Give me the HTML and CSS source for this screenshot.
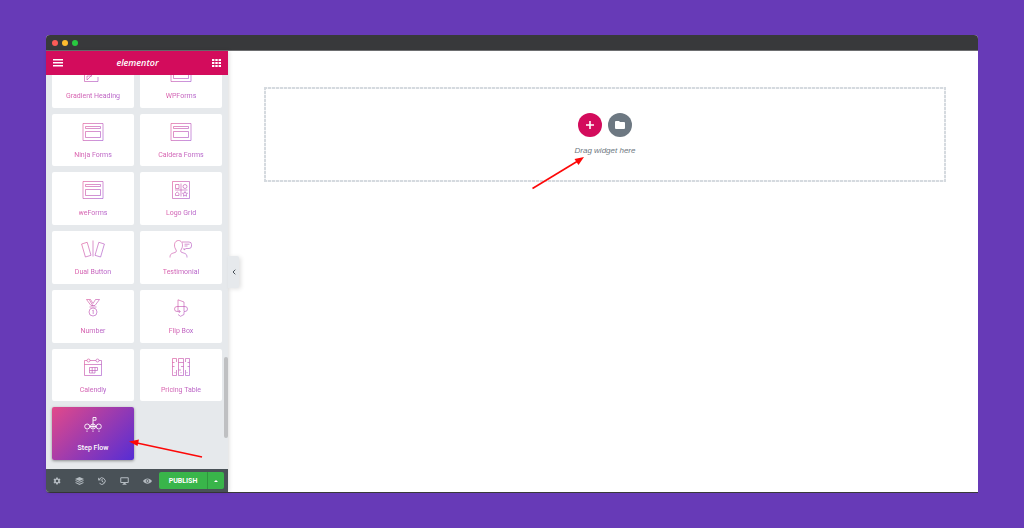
FILE: index.html
```html
<!DOCTYPE html>
<html lang="en">
<head>
  <meta charset="UTF-8" />
  <meta name="viewport" content="width=device-width, initial-scale=1.0"/>
  <title>Elementor</title>
  <link rel="stylesheet" href="styles.css">
</head>
<body>
  <!-- Shared icon parts -->
  <svg class="defs" aria-hidden="true">
    <defs>
      <linearGradient id="pink" gradientUnits="userSpaceOnUse" x1="0" y1="0" x2="24" y2="18">
        <stop offset="0" stop-color="#e2498a"/>
        <stop offset="1" stop-color="#9a4bd0"/>
      </linearGradient>
      <symbol id="form" viewBox="0 0 24 18">
        <path d="M2 .5h20v17H2zM4.500 3.500h15v2h-15zM4.500 8.500h15v6h-15z"/>
      </symbol>
    </defs>
  </svg>

  <div class="window">
    <div class="titlebar">
      <span class="dot red"></span>
      <span class="dot yellow"></span>
      <span class="dot green"></span>
    </div>

    <div class="editor">
      <!-- Widget panel -->
      <aside class="panel">
        <header class="panel-header">
          <button class="icon-btn" aria-label="Menu">
            <svg width="10" height="8" viewBox="0 0 10 8"><path d="M0 0h10v1.6H0zM0 3h10v1.6H0zM0 6h10v1.6H0z"/></svg>
          </button>
          <h1>elementor</h1>
          <button class="icon-btn" aria-label="Widgets">
            <svg width="9" height="8" viewBox="0 0 9 8"><path d="M0 0h2.4v2H0zM3.3 0h2.4v2H3.3zM6.6 0H9v2H6.6zM0 3h2.4v2H0zM3.3 3h2.4v2H3.3zM6.6 3H9v2H6.6zM0 6h2.4v2H0zM3.3 6h2.4v2H3.3zM6.6 6H9v2H6.6z"/></svg>
          </button>
        </header>

        <div class="panel-body">
          <div class="widgets">
            <button class="widget">
              <svg viewBox="0 0 24 18"><path d="M17 13v4.5H3.500V.5H17v6M6 16v-4h5M6 16l4-4M10 12l9-10"/></svg>
              <span>Gradient Heading</span>
            </button>
            <button class="widget">
              <svg viewBox="0 0 24 18"><use href="#form"/></svg>
              <span>WPForms</span>
            </button>
            <button class="widget">
              <svg viewBox="0 0 24 18"><use href="#form"/></svg>
              <span>Ninja Forms</span>
            </button>
            <button class="widget">
              <svg viewBox="0 0 24 18"><use href="#form"/></svg>
              <span>Caldera Forms</span>
            </button>
            <button class="widget">
              <svg viewBox="0 0 24 18"><use href="#form"/></svg>
              <span>weForms</span>
            </button>
            <button class="widget">
              <svg viewBox="0 0 24 18"><path d="M3.500 .5h17v17h-17zM12 2.500v13M6 9h12.500M6.500 3.500h3.500v4H6.500zM6.500 14.500v-2l1.700-1.500 1.800 1.500v2z"/><circle cx="16" cy="5.500" r="2"/><path d="M16 10.500l.7 1.600 1.800.2-1.300 1.200.4 1.700-1.600-.8-1.600.8.4-1.700-1.300-1.200 1.800-.2z"/></svg>
              <span>Logo Grid</span>
            </button>
            <button class="widget">
              <svg viewBox="0 0 24 18"><path d="M.6 4l5.600-1.700 3.800 13-5.600 1.700zM12 .5v16M23.400 4l-5.600-1.700-3.800 13 5.600 1.700z"/></svg>
              <span>Dual Button</span>
            </button>
            <button class="widget">
              <svg viewBox="0 0 24 18"><path d="M1 17.500c0-4 2-4 5-5 2-.7 1.500-2 .5-3.500C4.500 5.500 5.500.5 9.500.5s5 5 3 8.500c-1 1.500-1.500 2.800.5 3.500 3 1 5 1 5 5M13 2h7a2.500 2.500 0 0 1 2.500 2.500v1.500A2.500 2.500 0 0 1 20 8.500h-3l-2 1.500V8M15.500 4.200h5M15.500 6h3"/></svg>
              <span>Testimonial</span>
            </button>
            <button class="widget">
              <svg viewBox="0 0 24 18"><path d="M5.500 .5h4l2.500 4 2.500-4h4l-4.500 6h-4zM8.500 1l3.500 6M8.500 8h7"/><circle cx="12" cy="13" r="4"/><path d="M11.500 11.500l.7-.5v4"/></svg>
              <span>Number</span>
            </button>
            <button class="widget">
              <svg viewBox="0 0 24 18"><path d="M9 12V.8l6 2.200V12M9 7.500H8a2.500 2.500 0 0 0 0 5h3M15 7.500h1a2.500 2.500 0 0 1 0 5h-1M9 7.500h6M9.800 11l1.500 1.500-1.500 1.500M9 15.500l2.500 1.800 3.500-1.800v-3"/></svg>
              <span>Flip Box</span>
            </button>
            <button class="widget">
              <svg viewBox="0 0 24 18"><path d="M6 2.500H3.500v15h17v-15H18M9 2.500h6M3.500 6.500h17M8.500 9.500h8v3H14V15H8.500zM11.200 9.500V15M14 9.500v3M8.500 12.500H14"/><circle cx="7.500" cy="2.500" r="1.500"/><circle cx="16.500" cy="2.500" r="1.500"/></svg>
              <span>Calendly</span>
            </button>
            <button class="widget">
              <svg viewBox="0 0 24 18"><path d="M7.500 4V.5h-4v17h4V12M3.500 4.500h2M3.500 8.500h2M9.500 .5h5v17h-5zM9.500 4.500h5M12 8.500h2.500M9.500 12H12M16.500 4V.5h4v17h-4V12M18.500 4.500h2M18.500 8.500h2M12 14v1.200M18 14v1.200M6 14v1.200"/></svg>
              <span>Pricing Table</span>
            </button>
            <button class="widget active">
              <svg viewBox="0 0 24 18"><circle cx="6.200" cy="10.500" r="2.500"/><circle cx="12" cy="10.500" r="2.500"/><circle cx="17.800" cy="10.500" r="2.500"/><path d="M8.500 10.500h7M12 12V1.500h3v2.700h-3M6 14.500v1.400M12 14.500v1.400M18 14.500v1.400"/></svg>
              <span>Step Flow</span>
            </button>
          </div>
          <div class="scrollbar"></div>
        </div>

        <footer class="panel-footer">
          <div class="tools">
            <button class="icon-btn" aria-label="Settings">
              <svg width="8" height="8" viewBox="0 0 16 16"><path fill-rule="evenodd" d="M6.500 1h3l.5 2 1.500.8 2-.6 1.500 2.600-1.500 1.400v1.600l1.500 1.400-1.500 2.600-2-.6-1.500.8-.5 2h-3L6 13l-1.500-.8-2 .6L1 10.200l1.500-1.400V7.200L1 5.800l1.500-2.600 2 .6L6 3zM8 5.500a2.500 2.500 0 1 0 0 5 2.500 2.500 0 0 0 0-5z"/></svg>
            </button>
            <button class="icon-btn" aria-label="Navigator">
              <svg width="9" height="8" viewBox="0 0 18 16"><path d="M9 0l9 4-9 4-9-4zM2 6.500l7 3 7-3 2 1.200-9 4-9-4zM2 10.500l7 3 7-3 2 1.200L9 16l-9-4.300z"/></svg>
            </button>
            <button class="icon-btn" aria-label="History">
              <svg width="8" height="8" viewBox="0 0 16 16"><path class="line" d="M2.500 4.500A6.500 6.500 0 1 1 3 12.500M8 4v4.500l3 2"/><path d="M0 1l.5 6 5.500-.5z"/></svg>
            </button>
            <button class="icon-btn" aria-label="Responsive mode">
              <svg width="9" height="8" viewBox="0 0 18 16"><path class="line" d="M1.500 1.500h15V11h-15z"/><path d="M7 11h4l.5 3H13v1.500H5V14h1.500z"/></svg>
            </button>
            <button class="icon-btn" aria-label="Preview">
              <svg width="9" height="8" viewBox="0 0 18 16"><path fill-rule="evenodd" d="M0 8c4.500-7 13.500-7 18 0-4.500 7-13.500 7-18 0zM9 4.500a3.500 3.500 0 1 0 0 7 3.500 3.500 0 0 0 0-7z"/><circle cx="9" cy="8" r="2.200"/></svg>
            </button>
          </div>
          <div class="publish">
            <button class="publish-btn">PUBLISH</button>
            <button class="publish-more" aria-label="Save options">
              <svg width="4" height="2" viewBox="0 0 4 2"><path d="M0 2l2-2 2 2z"/></svg>
            </button>
          </div>
        </footer>

        <button class="collapse" aria-label="Hide panel">
          <svg width="4" height="6" viewBox="0 0 4 6"><path d="M3.300 .7L1 3l2.300 2.300"/></svg>
        </button>
      </aside>

      <!-- Canvas -->
      <main class="canvas">
        <section class="drop-area">
          <div class="drop-buttons">
            <button class="round add" aria-label="Add section">
              <svg width="8" height="8" viewBox="0 0 8 8"><path d="M3.200 0h1.600v3.200H8v1.600H4.800V8H3.200V4.800H0V3.200h3.200z"/></svg>
            </button>
            <button class="round" aria-label="Add template">
              <svg width="10" height="8" viewBox="0 0 10 8"><path d="M1 0h3l1 1h4a1 1 0 0 1 1 1v5a1 1 0 0 1-1 1H1a1 1 0 0 1-1-1V1a1 1 0 0 1 1-1z"/></svg>
            </button>
          </div>
          <p>Drag widget here</p>
        </section>
      </main>
    </div>

    <!-- Annotation arrows -->
    <svg class="arrow arrow-widget" width="74" height="22" viewBox="0 0 74 22"><path class="shaft" d="M8 5l65 14"/><path d="M0 3.500l10-2-1.500 6.500z"/></svg>
    <svg class="arrow arrow-drop" width="54" height="34" viewBox="0 0 54 34"><path class="shaft" d="M1.500 32.500L46 5.500"/><path d="M53 1l-5.500 8-4-6z"/></svg>
  </div>
</body>
</html>
```

FILE: styles.css
```css
* {
  margin: 0;
  padding: 0;
  box-sizing: border-box;
}

body {
  min-height: 100vh;
  padding: 35px 46px;
  display: flex;
  background: #673ab7;
  font-family: Roboto, "Liberation Sans", sans-serif;
}

button {
  border: none;
  background: none;
  font-family: inherit;
  cursor: pointer;
}

svg {
  display: block;
}

.defs {
  position: absolute;
  width: 0;
  height: 0;
}

/* Window */
.window {
  position: relative;
  flex: 1;
  display: flex;
  flex-direction: column;
  border-radius: 4px 4px 0 4px;
  border-bottom: 1px solid #38393a;
  background: #fff;
}

.titlebar {
  height: 16px;
  padding: 0 6px;
  display: flex;
  align-items: center;
  gap: 4px;
  background: #38393b;
  border-bottom: 1px solid #6d6e70;
  border-radius: 4px 4px 0 0;
}

.dot {
  width: 6px;
  height: 6px;
  border-radius: 50%;
}

.red { background: #fc5b57; }
.yellow { background: #fdbc2e; }
.green { background: #28c840; }

.editor {
  flex: 1;
  display: flex;
}

/* Panel */
.panel {
  position: relative;
  width: 182px;
  display: flex;
  flex-direction: column;
  background: #e6e9ec;
  border-radius: 0 0 0 4px;
  box-shadow: 1px 0 4px rgba(0,0,0,0.15);
}

.panel-header {
  height: 24px;
  padding: 0 7px;
  display: flex;
  align-items: center;
  justify-content: space-between;
  background: #d30c5c;
  color: #fff;
}

.panel-header h1 {
  font-family: "Open Sans", sans-serif;
  font-size: 9px;
  line-height: 12px;
  font-style: italic;
  font-weight: 600;
}

.icon-btn svg {
  fill: currentColor;
}

.panel-header .icon-btn {
  color: #fff;
}

.panel-body {
  position: relative;
  flex: 1 0 0;
  min-height: 0;
  padding: 0 6px 9px;
  display: flex;
  flex-direction: column;
  justify-content: flex-end;
  overflow: hidden;
}

.widgets {
  flex-shrink: 0;
  height: 405px;
  display: grid;
  grid-template-columns: 1fr 1fr;
  grid-auto-rows: 1fr;
  gap: 6px;
}

.widget {
  padding-top: 9px;
  display: flex;
  flex-direction: column;
  align-items: center;
  gap: 8px;
  background: #fff;
  border-radius: 2px;
}

.widget svg {
  width: 24px;
  height: 18px;
  fill: none;
  stroke: url(#pink);
  stroke-width: 0.6;
}

.widget span {
  font-size: 7px;
  line-height: 12px;
  color: transparent;
  background: linear-gradient(90deg, #dc5aa6, #b05fcb);
  -webkit-background-clip: text;
  background-clip: text;
}

.widget.active {
  background: linear-gradient(135deg, #e2498a 0%, #562dd4 100%);
  box-shadow: 0 1px 3px rgba(0,0,0,0.4);
}

.widget.active svg {
  stroke: #fff;
  stroke-width: 0.9;
}

.widget.active span {
  background: none;
  color: #fff;
  font-weight: 500;
}

.scrollbar {
  position: absolute;
  right: 0;
  bottom: 31px;
  width: 4px;
  height: 81px;
  border-radius: 2px;
  background: #bfc0c2;
}

.panel-footer {
  height: 23px;
  padding: 0 4px 0 7px;
  display: flex;
  align-items: center;
  justify-content: space-between;
  background: #495157;
  border-radius: 0 0 0 3px;
}

.tools {
  display: flex;
  gap: 14px;
}

.tools .icon-btn {
  color: #b4bbc1;
}

.tools .line {
  fill: none;
  stroke: currentColor;
  stroke-width: 2;
}

.publish {
  height: 17px;
  display: flex;
  border-radius: 2px;
  overflow: hidden;
}

.publish button {
  background: #39b54a;
  color: #fff;
}

.publish .publish-btn {
  width: 49px;
  font-size: 7px;
  font-weight: 700;
  line-height: 16px;
  border-right: 1px solid #2f963d;
}

.publish .publish-more {
  width: 16px;
  display: flex;
  align-items: center;
  justify-content: center;
}

.publish-more svg {
  fill: #fff;
}

.collapse {
  position: absolute;
  left: 100%;
  top: 205px;
  width: 11px;
  height: 32px;
  display: flex;
  align-items: center;
  justify-content: center;
  background: #e6e9ec;
  border-radius: 0 2px 2px 0;
  box-shadow: 2px 1px 4px rgba(0,0,0,0.12);
}

.collapse svg {
  fill: none;
  stroke: #495157;
}

/* Canvas */
.canvas {
  flex: 1;
  padding: 36px 32px 0 36px;
}

/* Short dashes on all four sides, tighter than border-style: dashed */
.drop-area {
  --dash-x: repeating-linear-gradient(90deg, #d5dadf 0 3px, #f4f5f7 3px 4px);
  --dash-y: repeating-linear-gradient(180deg, #d5dadf 0 3px, #f4f5f7 3px 4px);
  padding: 26px 0;
  display: flex;
  flex-direction: column;
  align-items: center;
  gap: 8px;
  background:
    var(--dash-x) top / 100% 2px no-repeat,
    var(--dash-x) bottom / 100% 2px no-repeat,
    var(--dash-y) left / 2px 100% no-repeat,
    var(--dash-y) right / 2px 100% no-repeat;
}

.drop-buttons {
  display: flex;
  gap: 6px;
}

.round {
  width: 24px;
  height: 24px;
  display: flex;
  align-items: center;
  justify-content: center;
  border-radius: 50%;
  background: #6d7882;
}

.round.add {
  background: #d30c5c;
}

.round svg {
  fill: #fff;
}

.drop-area p {
  font-family: "Liberation Sans", Arial, sans-serif;
  font-size: 8px;
  line-height: 11px;
  font-style: italic;
  color: #6d7882;
}

/* Arrows */
.arrow {
  position: absolute;
  fill: #fd0808;
}

.arrow .shaft {
  fill: none;
  stroke: #fd0808;
  stroke-width: 1.6;
}

.arrow-widget {
  left: 83px;
  top: 403px;
}

.arrow-drop {
  left: 485px;
  top: 121px;
}
```
